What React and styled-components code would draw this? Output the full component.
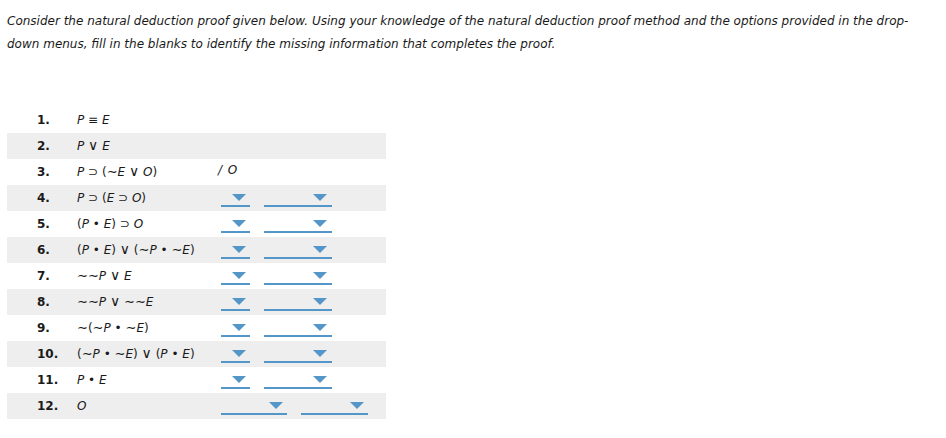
import React from "react";
import styled, { createGlobalStyle } from "styled-components";

const Global = createGlobalStyle`
  html, body { margin: 0; padding: 0; background: #fff; }
  body { font-family: "DejaVu Sans", Verdana, sans-serif; color: #1a1a1a; }
`;

const Page = styled.div`
  padding: 10px 7px 0 7px;
`;

const Intro = styled.p`
  margin: 0;
  width: 925px;
  font-size: 12px;
  line-height: 23px;
  font-style: italic;
`;

const Proof = styled.div`
  margin-top: 51px;
  width: 379px;
  display: flex;
  flex-direction: column;
`;

const Row = styled.div`
  display: grid;
  grid-template-columns: 70px 141px 1fr;
  height: 26px;
  background: ${(p) => (p.$shaded ? "#eeeeee" : "transparent")};
  font-size: 12px;
`;

const Num = styled.div`
  padding-left: 30px;
  font-weight: bold;
  line-height: 26px;
`;

const Formula = styled.div`
  line-height: 26px;
  white-space: nowrap;
  i { font-style: italic; }
`;

const Sym = styled.span`
  font-size: ${(p) => p.$size}px;
  line-height: 12px;
`;

const Just = styled.div`
  display: flex;
  align-items: flex-end;
  gap: 14px;
  padding-left: 3px;
  padding-bottom: 4px;
`;

const Conclusion = styled.div`
  align-self: center;
  font-style: italic;
  margin-left: -3px;
  word-spacing: 2px;
`;

const Drop = styled.div`
  box-sizing: border-box;
  width: ${(p) => p.$w}px;
  height: 13px;
  border-bottom: 2px solid #5596c9;
  display: flex;
  justify-content: flex-end;
  padding-right: ${(p) => p.$inset}px;
`;

const Arrow = styled.div`
  width: 0;
  height: 0;
  border-left: 7px solid transparent;
  border-right: 7px solid transparent;
  border-top: 7px solid #5596c9;
`;

const I = ({ children }) => <i>{children}</i>;
const V = () => <Sym $size={14}>∨</Sym>;
const T = () => <Sym $size={13}>∼</Sym>;

const rows = [
  { n: "1.", f: <><I>P</I> ≡ <I>E</I></> },
  { n: "2.", f: <><I>P</I> <V /> <I>E</I></> },
  { n: "3.", f: <><I>P</I> ⊃ (<T /><I>E</I> <V /> <I>O</I>)</>, concl: true },
  { n: "4.", f: <><I>P</I> ⊃ (<I>E</I> ⊃ <I>O</I>)</>, dd: "short" },
  { n: "5.", f: <>(<I>P</I> • <I>E</I>) ⊃ <I>O</I></>, dd: "short" },
  { n: "6.", f: <>(<I>P</I> • <I>E</I>) <V /> (<T /><I>P</I> • <T /><I>E</I>)</>, dd: "short" },
  { n: "7.", f: <><T /><T /><I>P</I> <V /> <I>E</I></>, dd: "short" },
  { n: "8.", f: <><T /><T /><I>P</I> <V /> <T /><T /><I>E</I></>, dd: "short" },
  { n: "9.", f: <><T />(<T /><I>P</I> • <T /><I>E</I>)</>, dd: "short" },
  { n: "10.", f: <>(<T /><I>P</I> • <T /><I>E</I>) <V /> (<I>P</I> • <I>E</I>)</>, dd: "short" },
  { n: "11.", f: <><I>P</I> • <I>E</I></>, dd: "short" },
  { n: "12.", f: <><I>O</I></>, dd: "long" },
];

export default function App() {
  return (
    <>
      <Global />
      <Page>
        <Intro>
          Consider the natural deduction proof given below. Using your knowledge of the natural
          deduction proof method and the options provided in the drop-down menus, fill in the
          blanks to identify the missing information that completes the proof.
        </Intro>
        <Proof>
          {rows.map((r, i) => (
            <Row key={r.n} $shaded={i % 2 === 1}>
              <Num>{r.n}</Num>
              <Formula>{r.f}</Formula>
              <Just>
                {r.concl && <Conclusion>/ O</Conclusion>}
                {r.dd === "short" && (
                  <>
                    <Drop $w={29} $inset={4}><Arrow /></Drop>
                    <Drop $w={68} $inset={5}><Arrow /></Drop>
                  </>
                )}
                {r.dd === "long" && (
                  <>
                    <Drop $w={66} $inset={4}><Arrow /></Drop>
                    <Drop $w={67} $inset={4}><Arrow /></Drop>
                  </>
                )}
              </Just>
            </Row>
          ))}
        </Proof>
      </Page>
    </>
  );
}
